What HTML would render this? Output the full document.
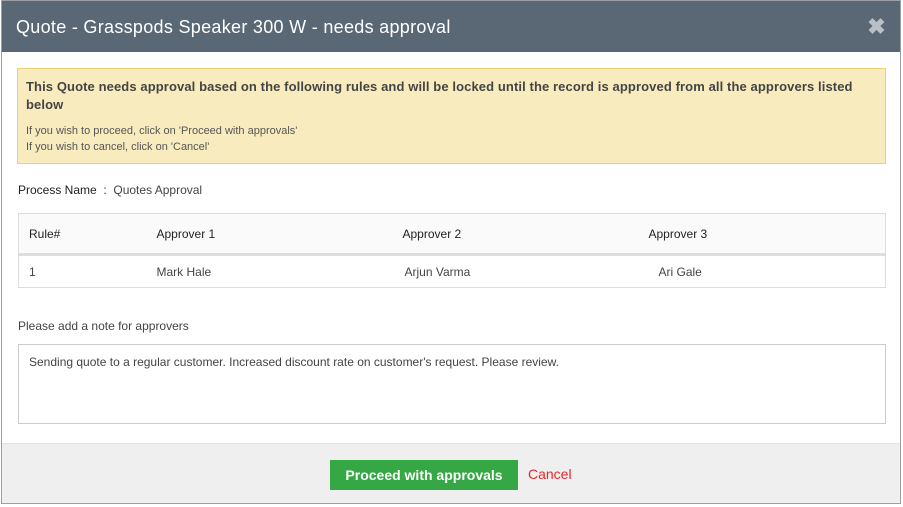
<!DOCTYPE html>
<html><head><style>
*{box-sizing:border-box;margin:0;padding:0}
body{width:903px;height:507px;background:#fff;font-family:"Liberation Sans",sans-serif;position:relative;overflow:hidden;color:#333}
.modal{position:absolute;left:1px;top:0px;width:900px;height:504px;border:1px solid #9aa0a6;background:#fff}
.hdr{position:absolute;left:0;top:0;width:898px;height:51px;background:#5a6875;color:#fff;font-size:18px;letter-spacing:0.3px;padding:16px 0 0 14px}
.x{position:absolute;right:14px;top:13px;color:#b9c0c7;font-size:22px;font-weight:bold}
.alert{position:absolute;left:15px;top:67px;width:869px;height:96px;background:#f8ecbf;border:1px solid #efcf74;padding:9px 8px;font-size:12px}
.alert b{display:block;font-weight:bold;font-size:13px;line-height:18px;color:#444;letter-spacing:0.1px}
.alert p{font-size:11px;line-height:16px;color:#555}
.pn{position:absolute;left:16px;top:182px;font-size:12px}
table{position:absolute;left:16px;top:212px;width:868px;border:1px solid #ddd;border-collapse:collapse;font-size:12px}
th{font-weight:normal;text-align:left;height:41px;background:#fafafa;border-bottom:3px solid #ddd;color:#222}
td{height:33px;color:#444}
.lbl{position:absolute;left:16px;top:318px;font-size:12px;color:#444}
.ta{position:absolute;left:16px;top:343px;width:868px;height:80px;border:1px solid #ccc;padding:10px 10px;font-size:12px;color:#444}
.ft{position:absolute;left:0;top:442px;width:898px;height:60px;background:#efefef;border-top:1px solid #e2e2e2}
.btn{position:absolute;left:328px;top:16px;width:188px;height:30px;background:#35a845;color:#fff;font-weight:bold;font-size:14px;text-align:center;line-height:30px}
.cn{position:absolute;left:526px;top:22px;color:#e8262a;font-size:14px}
</style></head><body>
<div class="modal">
<div class="hdr">Quote - Grasspods Speaker 300 W - needs approval<span class="x">✖</span></div>
<div class="alert"><b>This Quote needs approval based on the following rules and will be locked until the record is approved from all the approvers listed below</b><p style="margin-top:9px">If you wish to proceed, click on 'Proceed with approvals'</p><p>If you wish to cancel, click on 'Cancel'</p></div>
<div class="pn"><span style="color:#222">Process Name</span> &nbsp;: &nbsp;<span style="color:#444">Quotes Approval</span></div>
<table><tr><th style="width:138px;padding-left:10px">Rule#</th><th style="width:246px">Approver 1</th><th style="width:246px">Approver 2</th><th>Approver 3</th></tr>
<tr><td style="padding-left:10px">1</td><td>Mark Hale</td><td style="padding-left:2px">Arjun Varma</td><td style="padding-left:10px">Ari Gale</td></tr></table>
<div class="lbl">Please add a note for approvers</div>
<div class="ta">Sending quote to a regular customer. Increased discount rate on customer's request. Please review.</div>
<div class="ft"><div class="btn">Proceed with approvals</div><div class="cn">Cancel</div></div>
</div>
</body></html>
